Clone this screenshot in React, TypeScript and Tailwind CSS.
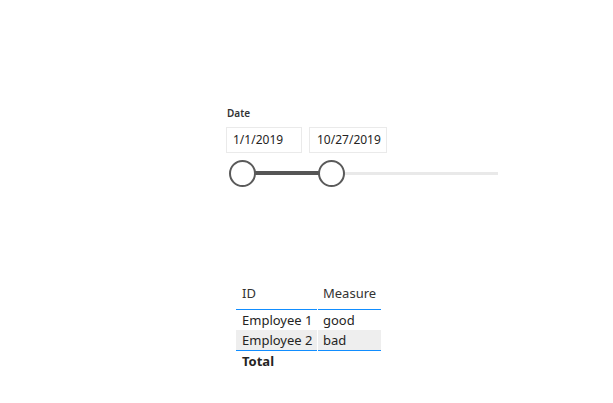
export default function App() {
  return (
    <div
      className="min-h-[403px] w-full bg-white text-[#252423]"
      style={{ fontFamily: '"Segoe UI", "Noto Sans", sans-serif' }}
    >
      {/* Date slicer */}
      <div className="pl-[226px] pt-[106px]">
        <div className="pl-[1px] text-[10px] font-semibold leading-[14px] text-[#333]">Date</div>
        <div className="mt-[7px] flex gap-[7px]">
          <div className="flex h-[26px] w-[76px] items-center border border-[#eaeaea] pl-[6px] text-[12px]">
            1/1/2019
          </div>
          <div className="flex h-[26px] w-[78px] items-center border border-[#eaeaea] pl-[7px] text-[12px]">
            10/27/2019
          </div>
        </div>
        <div className="relative mt-[7px] h-[28px] w-[272px]">
          <div className="absolute left-[16px] right-0 top-[12px] h-[3px] bg-[#e9e9e9]" />
          <div className="absolute left-[16px] top-[11px] h-[4px] w-[89px] bg-[#555]" />
          <div className="absolute left-[3px] top-[0px] h-[27px] w-[27px] rounded-full border-2 border-[#5a5a5a] bg-white" />
          <div className="absolute left-[92px] top-[0px] h-[27px] w-[27px] rounded-full border-2 border-[#5a5a5a] bg-white" />
        </div>
      </div>

      {/* Table */}
      <div className="mt-[94px] pl-[236px]">
        <div className="grid w-[145px] grid-cols-[81px_63px] gap-x-[1px] text-[13px] leading-[18px]">
          <div className="border-b border-[#118DFF] pb-[7px] pl-[6px] pt-[2px] text-[#333]">ID</div>
          <div className="border-b border-[#118DFF] pb-[7px] pl-[5px] pt-[2px] text-[#333]">Measure</div>
          <div className="py-[1px] pl-[6px]">Employee 1</div>
          <div className="py-[1px] pl-[5px]">good</div>
          <div className="border-b border-[#118DFF] bg-[#eeeeee] py-[1px] pl-[6px]">Employee 2</div>
          <div className="border-b border-[#118DFF] bg-[#eeeeee] py-[1px] pl-[5px]">bad</div>
          <div className="py-[1px] pl-[6px] font-bold">Total</div>
          <div className="py-[1px] pl-[5px]" />
        </div>
      </div>
    </div>
  );
}
